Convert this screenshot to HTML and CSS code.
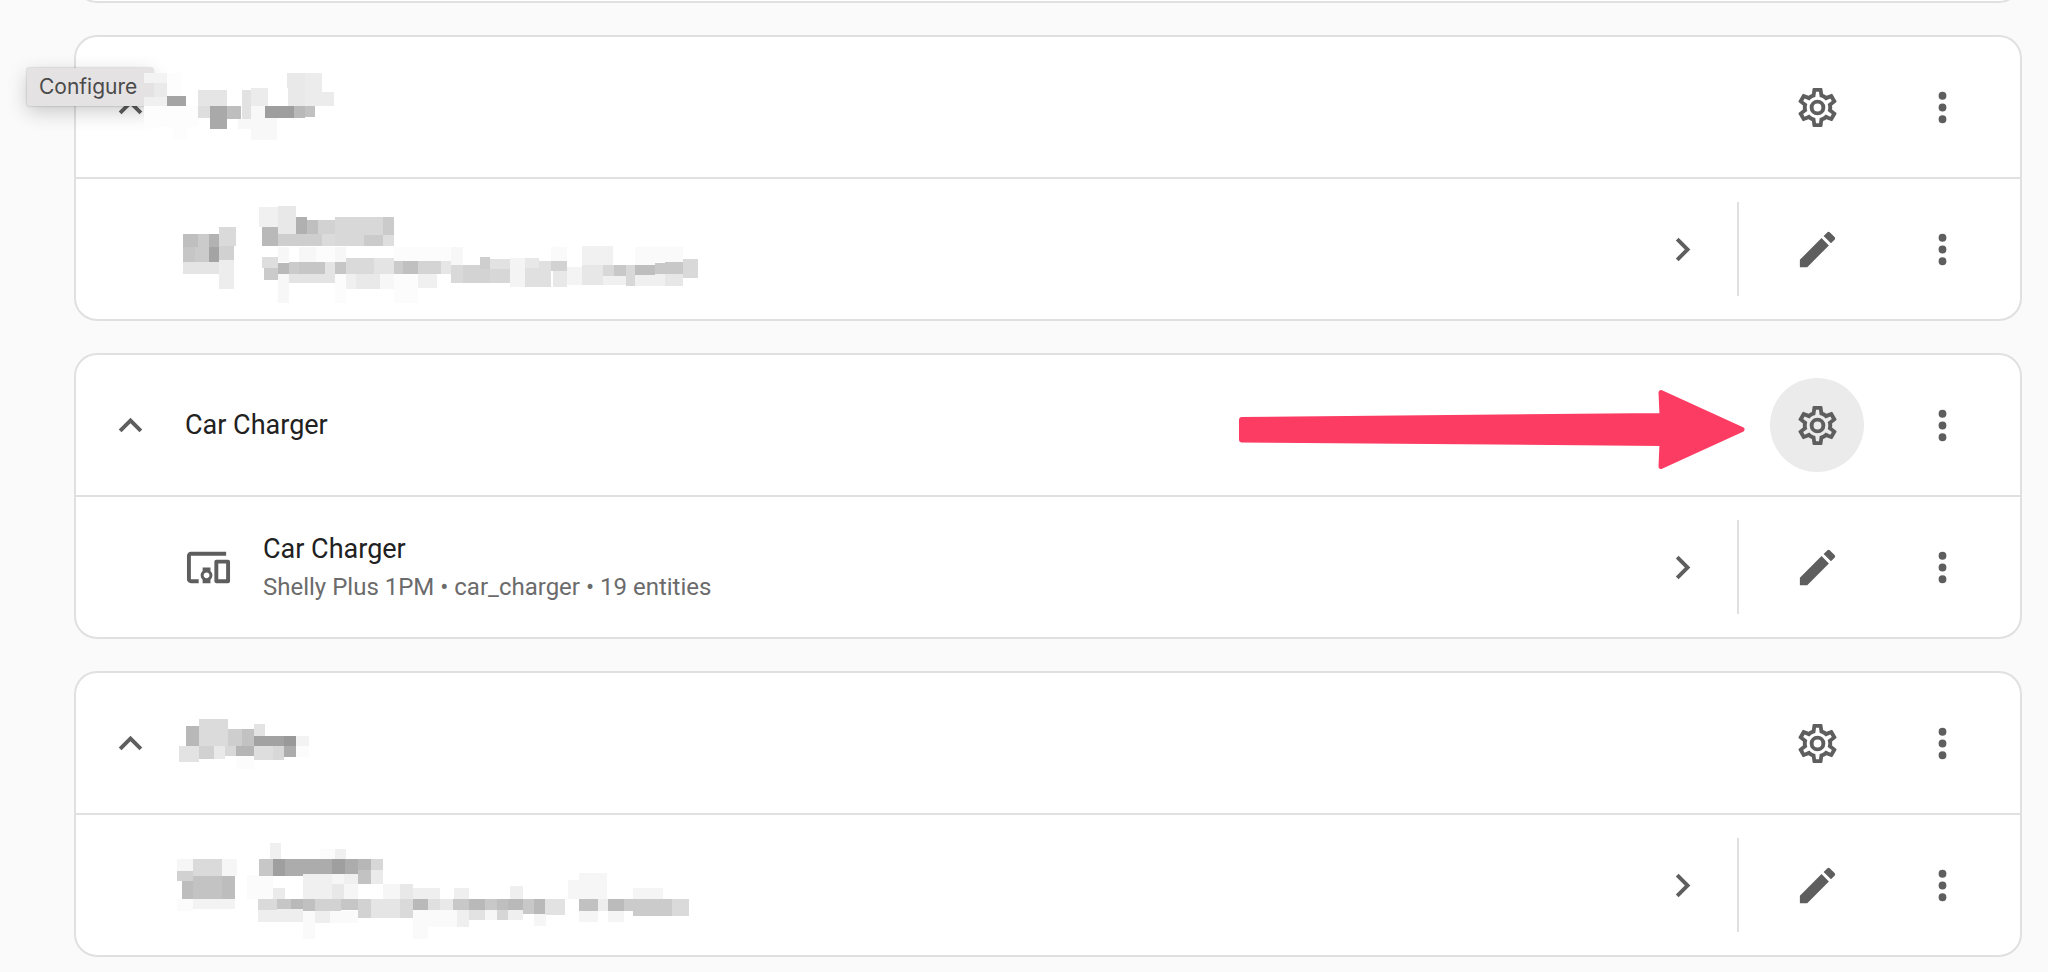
FILE: index.html
```html
<!DOCTYPE html>
<html lang="en">
<head>
  <meta charset="UTF-8" />
  <meta name="viewport" content="width=device-width, initial-scale=1" />
  <title>Devices</title>
  <link rel="stylesheet" href="styles.css">
</head>
<body>
  <svg class="sprite" aria-hidden="true">
    <symbol id="chevron-up" viewBox="0 0 24 24"><path d="M7.41,15.41L12,10.83L16.59,15.41L18,14L12,8L6,14L7.41,15.41Z"/></symbol>
    <symbol id="chevron-right" viewBox="0 0 24 24"><path d="M8.59,16.58L13.17,12L8.59,7.41L10,6L16,12L10,18L8.59,16.58Z"/></symbol>
    <symbol id="dots" viewBox="0 0 24 24"><path d="M12,16A2,2 0 0,1 14,18A2,2 0 0,1 12,20A2,2 0 0,1 10,18A2,2 0 0,1 12,16M12,10A2,2 0 0,1 14,12A2,2 0 0,1 12,14A2,2 0 0,1 10,12A2,2 0 0,1 12,10M12,4A2,2 0 0,1 14,6A2,2 0 0,1 12,8A2,2 0 0,1 10,6A2,2 0 0,1 12,4Z"/></symbol>
    <symbol id="pencil" viewBox="0 0 24 24"><path d="M20.71,7.04C21.1,6.65 21.1,6 20.71,5.63L18.37,3.29C18,2.9 17.35,2.9 16.96,3.29L15.12,5.12L18.87,8.87M3,17.25V21H6.75L17.81,9.93L14.06,6.18L3,17.25Z"/></symbol>
    <symbol id="devices" viewBox="0 0 24 24"><path d="M3 6H21V4H3C1.9 4 1 4.9 1 6V18C1 19.1 1.9 20 3 20H7V18H3V6M13 12H9V13.78C8.39 14.33 8 15.11 8 16C8 16.89 8.39 17.67 9 18.22V20H13V18.22C13.61 17.67 14 16.88 14 16S13.61 14.33 13 13.78V12M11 17.5C10.17 17.5 9.5 16.83 9.5 16S10.17 14.5 11 14.5 12.5 15.17 12.5 16 11.83 17.5 11 17.5M22 8H16C15.5 8 15 8.5 15 9V19C15 19.5 15.5 20 16 20H22C22.5 20 23 19.5 23 19V9C23 8.5 22.5 8 22 8M21 18H17V10H21V18Z"/></symbol>
    <symbol id="cog" viewBox="0 0 24 24"><path d="M12,8A4,4 0 0,1 16,12A4,4 0 0,1 12,16A4,4 0 0,1 8,12A4,4 0 0,1 12,8M12,10A2,2 0 0,0 10,12A2,2 0 0,0 12,14A2,2 0 0,0 14,12A2,2 0 0,0 12,10M10,22C9.75,22 9.54,21.82 9.5,21.58L9.13,18.93C8.5,18.68 7.96,18.34 7.44,17.94L4.95,18.95C4.73,19.03 4.46,18.95 4.34,18.73L2.34,15.27C2.21,15.05 2.27,14.78 2.46,14.63L4.57,12.97L4.5,12L4.57,11L2.46,9.37C2.27,9.22 2.21,8.95 2.34,8.73L4.34,5.27C4.46,5.05 4.73,4.96 4.95,5.05L7.44,6.05C7.96,5.66 8.5,5.32 9.13,5.07L9.5,2.42C9.54,2.18 9.75,2 10,2H14C14.25,2 14.46,2.18 14.5,2.42L14.87,5.07C15.5,5.32 16.04,5.66 16.56,6.05L19.05,5.05C19.27,4.96 19.54,5.05 19.66,5.27L21.66,8.73C21.79,8.95 21.73,9.22 21.54,9.37L19.43,11L19.5,12L19.43,13L21.54,14.63C21.73,14.78 21.79,15.05 21.66,15.27L19.66,18.73C19.54,18.95 19.27,19.04 19.05,18.95L16.56,17.95C16.04,18.34 15.5,18.68 14.87,18.93L14.5,21.58C14.46,21.82 14.25,22 14,22H10M11.25,4L10.88,6.61C9.68,6.86 8.62,7.5 7.85,8.39L5.44,7.35L4.69,8.65L6.8,10.2C6.4,11.37 6.4,12.64 6.8,13.8L4.68,15.36L5.43,16.66L7.86,15.62C8.63,16.5 9.68,17.14 10.87,17.38L11.24,20H12.76L13.13,17.39C14.32,17.14 15.37,16.5 16.14,15.62L18.57,16.66L19.32,15.36L17.2,13.81C17.6,12.64 17.6,11.37 17.2,10.2L19.31,8.65L18.56,7.35L16.15,8.39C15.38,7.5 14.32,6.86 13.12,6.62L12.75,4H11.25Z"/></symbol>
  </svg>

  <main class="entries">
    <section class="card card-above"></section>

    <section class="card">
      <div class="card-header">
        <button class="toggle" aria-label="Collapse"><svg class="icon"><use href="#chevron-up"/></svg></button>
        <div class="title">
          <svg class="mosaic" width="300" height="94" viewBox="555 177 900 282" aria-hidden="true">
            <path fill="#fdfdfd" d="M432 316h162v62H432zM520 378h42v38h-42zM502 216h40v70h-40z"/>
            <path fill="#f3f3f3" d="M432 216h70v30h-70z"/>
            <path fill="#e4e2e3" d="M432 246h31v41h-31z"/>
            <path fill="#eaeaea" d="M463 246h39v41h-39z"/>
            <path fill="#f0f0f0" d="M432 287h70v29h-70z"/>
            <path fill="#a4a4a4" d="M502 286h56v29h-56z"/>
            <path fill="#e5e5e5" d="M594 268h87v48h-87z"/>
            <path fill="#dedede" d="M594 316h37v35h-37z"/>
            <path fill="#a9a9a9" d="M631 316h50v67h-50z"/>
            <path fill="#bebebe" d="M681 316h42v37h-42z"/>
            <path fill="#e2e2e2" d="M725 268h29v85h-29z"/>
            <path fill="#ececec" d="M754 261h50v54h-50z"/>
            <path fill="#f8f8f8" d="M714 353h40v30h-40zM754 315h41v36h36v67h-77z"/>
            <path fill="#9e9e9e" d="M795 316h88v35h-88z"/>
            <path fill="#b9b9b9" d="M883 316h32v35h-32z"/>
            <path fill="#c1c1c1" d="M915 316h30v32h-30z"/>
            <path fill="#e9e9e9" d="M862 216h53v99h-50v-55h-3z"/>
            <path fill="#ececec" d="M915 216h50v58h38v41h-88z"/>
          </svg>
        </div>
        <button class="icon-button" aria-label="Configure"><svg class="icon"><use href="#cog"/></svg></button>
        <button class="icon-button" aria-label="Menu"><svg class="icon"><use href="#dots"/></svg></button>
      </div>
      <div class="tooltip" role="tooltip">Configure</div>
      <div class="device">
        <a class="device-link" href="#" aria-label="Open device">
          <svg class="mosaic" width="560" height="94" viewBox="75 36 1680 282" aria-hidden="true">
            <path fill="#bfbfbf" d="M69 131h45v39H69z"/>
            <path fill="#cbcbcb" d="M114 131h32v85h-41v-46h9z"/>
            <path fill="#b2b2b2" d="M146 131h31v39h-31z"/>
            <path fill="#c6c6c6" d="M69 170h36v46H69z"/>
            <path fill="#a4a4a4" d="M146 170h31v46h-31z"/>
            <path fill="#dadada" d="M177 111h51v57h-51z"/>
            <path fill="#d1d1d1" d="M177 168h45v42h-45z"/>
            <path fill="#ededed" d="M177 210h45v87h-45z"/>
            <path fill="#e5e5e5" d="M69 216h108v35H69z"/>
            <path fill="#f0f0f0" d="M297 52h56v59h-56z"/>
            <path fill="#e8e8e8" d="M353 48h55v83h-55z"/>
            <path fill="#b9b9b9" d="M306 111h47v57h-47z"/>
            <path fill="#b0b0b0" d="M408 81h33v51h-33z"/>
            <path fill="#bfbfbf" d="M441 90h32v42h-32z"/>
            <path fill="#d2d2d2" d="M473 90h52v42h-52z"/>
            <path fill="#cecece" d="M353 132h132v36H353z"/>
            <path fill="#dbdbdb" d="M485 132h40v36h-40z"/>
            <path fill="#d8d8d8" d="M525 81h144v87H525z"/>
            <path fill="#cbcbcb" d="M613 134h56v34h-56zM669 81h32v53h-32z"/>
            <path fill="#dedede" d="M669 134h32v34h-32z"/>
            <path fill="#f7f7f7" d="M353 170h35v46h-35zM417 170h50v46h-50zM353 251h35v87h-35zM525 170h33v46h-33z"/>
            <path fill="#fcfcfc" d="M467 170h58v46h-58zM525 251h33v87h-33zM701 170h172v43H701zM701 251h72v87h-72z"/>
            <path fill="#dedede" d="M306 201h47v33h-47z"/>
            <path fill="#cbcbcb" d="M312 234h41v35h-41zM388 216h29v35h-29zM701 213h29v38h-29z"/>
            <path fill="#b9b9b9" d="M353 219h35v32h-35z"/>
            <path fill="#c6c6c6" d="M417 216h79v35h-79zM525 216h33v35h-33z"/>
            <path fill="#e4e4e4" d="M388 251h137v28H388zM496 216h29v35h-29zM642 204h59v47h-59z"/>
            <path fill="#dadada" d="M558 204h84v47h-84z"/>
            <path fill="#f0f0f0" d="M558 251h29v46h-29zM773 251h57v43h-57z"/>
            <path fill="#e9e9e9" d="M587 251h73v46h-73z"/>
            <path fill="#f7f7f7" d="M660 251h41v46h-41zM873 170h36v55h-36z"/>
            <path fill="#c0c0c0" d="M730 213h44v38h-44z"/>
            <path fill="#d4d4d4" d="M774 213h70v38h-70z"/>
            <path fill="#e6e6e6" d="M844 213h29v38h-29z"/>
            <path fill="#d9d9d9" d="M873 225h35v54h-35z"/>
            <path fill="#d3d3d3" d="M908 225h82v54h-82z"/>
            <path fill="#cecece" d="M960 201h30v36h-30z"/>
            <path fill="#e2e2e2" d="M990 207h59v30h-59z"/>
            <path fill="#d7d7d7" d="M990 237h59v42h-59z"/>
            <path fill="#f4f4f4" d="M1049 204h46v87h-46zM1221 230h44v55h-44z"/>
            <path fill="#e8e8e8" d="M1095 204h41v30h-41zM1180 242h41v49h-41z"/>
            <path fill="#e0e0e0" d="M1095 234h41v-21h38v78h-79z"/>
            <path fill="#d2d2d2" d="M1174 213h47v29h-47z"/>
            <path fill="#fafafa" d="M1174 170h47v43h-47zM1425 170h60v55h-60zM1485 170h84v46h-84z"/>
            <path fill="#f1f1f1" d="M1265 168h94v57h-94z"/>
            <path fill="#e7e7e7" d="M1265 225h64v60h-64zM1516 251h53v37h-53z"/>
            <path fill="#d8d8d8" d="M1329 225h33v32h-33zM1398 225h27v64h-27z"/>
            <path fill="#c8c8c8" d="M1362 225h36v32h-36zM1485 219h31v-3h53v35h-84z"/>
            <path fill="#bebebe" d="M1425 225h60v31h-60z"/>
            <path fill="#f0f0f0" d="M1329 257h69v28h-69zM1425 256h60v-5h31v37h-91z"/>
            <path fill="#d9d9d9" d="M1569 207h44v56h-44z"/>
          </svg>
          <svg class="icon next"><use href="#chevron-right"/></svg>
        </a>
        <span class="separator"></span>
        <button class="icon-button" aria-label="Edit device"><svg class="icon"><use href="#pencil"/></svg></button>
        <button class="icon-button" aria-label="Menu"><svg class="icon"><use href="#dots"/></svg></button>
      </div>
    </section>

    <section class="card">
      <div class="card-header">
        <button class="toggle" aria-label="Collapse"><svg class="icon"><use href="#chevron-up"/></svg></button>
        <div class="title">Car Charger</div>
        <svg class="arrow" width="506" height="80" viewBox="0 0 506 80" aria-hidden="true">
          <path d="M2.5 29.5L423 25.5L422 2.5L503 39.5L422 76.5L423 53.5L2.5 50Z"/>
        </svg>
        <button class="icon-button active" aria-label="Configure"><svg class="icon"><use href="#cog"/></svg></button>
        <button class="icon-button" aria-label="Menu"><svg class="icon"><use href="#dots"/></svg></button>
      </div>
      <div class="device">
        <a class="device-link" href="#">
          <svg class="icon"><use href="#devices"/></svg>
          <div class="device-text">
            <div class="device-name">Car Charger</div>
            <div class="device-info">Shelly Plus 1PM • car_charger • 19 entities</div>
          </div>
          <svg class="icon next"><use href="#chevron-right"/></svg>
        </a>
        <span class="separator"></span>
        <button class="icon-button" aria-label="Edit device"><svg class="icon"><use href="#pencil"/></svg></button>
        <button class="icon-button" aria-label="Menu"><svg class="icon"><use href="#dots"/></svg></button>
      </div>
    </section>

    <section class="card">
      <div class="card-header">
        <button class="toggle" aria-label="Collapse"><svg class="icon"><use href="#chevron-up"/></svg></button>
        <div class="title">
          <svg class="mosaic" width="300" height="94" viewBox="75 18 900 282" aria-hidden="true">
            <path fill="#b8b8b8" d="M78 108h39v60H78z"/>
            <path fill="#dbdbdb" d="M117 88h87v80h-87z"/>
            <path fill="#cecece" d="M204 118h41v50h-41z"/>
            <path fill="#c2c2c2" d="M245 118h37v50h-37z"/>
            <path fill="#e3e3e3" d="M282 102h33v36h-33zM57 168h60v48H57z"/>
            <path fill="#d1d1d1" d="M117 168h45v39h-45z"/>
            <path fill="#e9e9e9" d="M162 168h33v39h-33z"/>
            <path fill="#d8d8d8" d="M195 168h33v30h-33zM338 168h34v41h-34z"/>
            <path fill="#b5b5b5" d="M228 168h54v30h-54z"/>
            <path fill="#dedede" d="M282 168h56v41h-56z"/>
            <path fill="#a2a2a2" d="M282 138h89v30h-89z"/>
            <path fill="#999" d="M371 138h37v30h-37z"/>
            <path fill="#acacac" d="M371 168h37v33h-37z"/>
            <path fill="#f3f3f3" d="M408 138h39v30h-39z"/>
            <path fill="#fcfcfc" d="M408 168h39v33h-39zM228 198h54v38h-54z"/>
          </svg>
        </div>
        <button class="icon-button" aria-label="Configure"><svg class="icon"><use href="#cog"/></svg></button>
        <button class="icon-button" aria-label="Menu"><svg class="icon"><use href="#dots"/></svg></button>
      </div>
      <div class="device">
        <a class="device-link" href="#" aria-label="Open device">
          <svg class="mosaic" width="560" height="94" viewBox="75 24 1680 282" aria-hidden="true">
            <path fill="#f6f6f6" d="M51 87h48v35H51zM186 87h45v52h-45z"/>
            <path fill="#dadada" d="M99 87h87v52H99z"/>
            <path fill="#d1d1d1" d="M51 122h48v32H51z"/>
            <path fill="#bdbdbd" d="M66 154h33v53H66zM186 139h39v68h-39z"/>
            <path fill="#c3c3c3" d="M99 139h87v68H99z"/>
            <path fill="#f3f3f3" d="M99 207h126v30H99z"/>
            <path fill="#fbfbfb" d="M51 207h48v35H51zM262 136h77v71h-77zM481 57h45v30h-45z"/>
            <path fill="#f0f0f0" d="M330 39h32v48h-32zM526 57h32v30h-32z"/>
            <path fill="#c7c7c7" d="M297 87h42v50h-42z"/>
            <path fill="#9f9f9f" d="M339 87h35v50h-35zM517 87h38v46h-38z"/>
            <path fill="#acacac" d="M374 87h143v46h-88v4h-55zM555 87h38v46h-38z"/>
            <path fill="#b7b7b7" d="M593 87h41v33h-41z"/>
            <path fill="#c2c2c2" d="M593 120h41v43h-41z"/>
            <path fill="#d7d7d7" d="M634 87h35v33h-35z"/>
            <path fill="#ebebeb" d="M634 120h35v43h-35zM339 174h35v33h-35z"/>
            <path fill="#f0f0f0" d="M429 133h88v74h-88zM552 133h41v30h-41z"/>
            <path fill="#e8e8e8" d="M517 163h35v44h-35zM719 162h40v45h-40z"/>
            <path fill="#f6f6f6" d="M517 133h35v30h-35zM552 163h41v44h-41zM669 162h50v45h-50z"/>
            <path fill="#dadada" d="M294 207h57v33h-57zM721 207h38v56h-38z"/>
            <path fill="#c6c6c6" d="M351 207h43v29h-43zM543 207h50v34h-50z"/>
            <path fill="#b9b9b9" d="M394 207h35v29h-35zM759 207h45v32h-45z"/>
            <path fill="#c0c0c0" d="M429 207h36v35h-36z"/>
            <path fill="#d2d2d2" d="M465 207h78v35h-78zM593 207h41v56h-41z"/>
            <path fill="#e5e5e5" d="M634 207h87v56h-87z"/>
            <path fill="#eee" d="M294 240h57v-4h78v41H294zM465 242h46v37h-46z"/>
            <path fill="#fafafa" d="M511 242h82v37h-82zM429 242h36v85h-36zM759 239h45v88h-45zM804 239h87v52h-87z"/>
            <path fill="#efefef" d="M759 174h82v33h-82zM882 174h45v33h-45z"/>
            <path fill="#dfdfdf" d="M804 207h37v32h-37z"/>
            <path fill="#e9e9e9" d="M841 207h38v32h-38z"/>
            <path fill="#c8c8c8" d="M879 207h48v32h-48z"/>
            <path fill="#efefef" d="M891 239h36v52h-36zM1044 239h45v31h-45zM1051 168h38v39h-38z"/>
            <path fill="#b9b9b9" d="M927 207h48v32h-48zM1044 207h45v32h-45zM1122 207h33v45h-33z"/>
            <path fill="#e2e2e2" d="M927 239h48v31h-48zM1155 207h60v47h-60z"/>
            <path fill="#c8c8c8" d="M975 207h36v32h-36zM1089 207h33v45h-33z"/>
            <path fill="#bfbfbf" d="M1011 207h33v32h-33z"/>
            <path fill="#f6f6f6" d="M975 239h36v31h-36zM1122 252h35v37h-35zM1224 151h33v56h-33zM1257 130h84v77h-84z"/>
            <path fill="#d6d6d6" d="M1011 239h33v32h-33z"/>
            <path fill="#c1c1c1" d="M1257 207h57v37h-57z"/>
            <path fill="#eee" d="M1314 207h30v37h-30z"/>
            <path fill="#bbb" d="M1344 207h48v37h-48z"/>
            <path fill="#cbcbcb" d="M1392 207h144v51h-117v-14h-27z"/>
            <path fill="#dadada" d="M1536 207h51v51h-51z"/>
            <path fill="#f5f5f5" d="M1419 174h89v33h-89zM1257 244h57v33h-57zM1344 244h48v33h-48z"/>
          </svg>
          <svg class="icon next"><use href="#chevron-right"/></svg>
        </a>
        <span class="separator"></span>
        <button class="icon-button" aria-label="Edit device"><svg class="icon"><use href="#pencil"/></svg></button>
        <button class="icon-button" aria-label="Menu"><svg class="icon"><use href="#dots"/></svg></button>
      </div>
    </section>
  </main>
</body>
</html>
```
FILE: styles.css
```css
* {
  box-sizing: border-box;
}

body {
  margin: 0;
  background-color: #fafafa;
  color: #212121;
  font-family: Roboto, sans-serif;
  font-size: 27px;
  overflow: hidden;
}

.sprite {
  display: none;
}

.entries {
  display: flex;
  flex-direction: column;
  gap: 32px;
  padding: 0 26px 0 74px;
}

.card {
  position: relative;
  background-color: #fff;
  border: 2px solid #e0e0e0;
  border-radius: 23px;
}

/* only the lower edge of this card is scrolled into view */
.card-above {
  height: 60px;
  margin-top: -57px;
}

.card-header,
.device {
  display: flex;
  align-items: center;
  gap: 31px;
  height: 140px;
  padding: 0 31px;
}

.card-header {
  position: relative;
}

.device {
  box-sizing: content-box;
  border-top: 2px solid #e0e0e0;
  padding-left: 109px;
}

button {
  border: none;
  padding: 0;
  background: none;
  color: #5e5e5e;
  cursor: pointer;
}

.icon {
  display: block;
  flex: none;
  width: 47px;
  height: 47px;
  fill: #5e5e5e;
}

.icon-button {
  display: flex;
  align-items: center;
  justify-content: center;
  flex: none;
  width: 94px;
  height: 94px;
  border-radius: 50%;
}

.icon-button.active,
.icon-button:hover {
  background-color: #ebebeb;
}

.title {
  flex: 1;
  line-height: 40px;
}

.device-link {
  display: flex;
  flex: 1;
  align-items: center;
  gap: 31px;
  color: inherit;
  text-decoration: none;
}

.device-name {
  line-height: 40px;
}

.device-info {
  color: #6b6b6b;
  font-size: 24px;
  line-height: 36px;
}

.next {
  margin-left: auto;
}

.separator {
  width: 2px;
  height: 94px;
  background-color: #e0e0e0;
}

.mosaic {
  position: relative;
  z-index: 2;
  display: block;
  overflow: visible;
  shape-rendering: crispEdges;
}

.arrow {
  position: absolute;
  top: 35px;
  right: 275px;
  fill: #fc3c62;
  stroke: #fc3c62;
  stroke-width: 5;
  stroke-linejoin: round;
}

.tooltip {
  position: absolute;
  z-index: 1;
  top: 31px;
  left: -49px;
  padding: 0 16px 0 12px;
  background-color: #e5e2e3;
  border-radius: 2px;
  box-shadow: 0 0 2px rgba(0,0,0,0.3), 0 6px 20px rgba(0,0,0,0.2);
  color: #4a4a4a;
  font-family: Inter, sans-serif;
  font-size: 21px;
  line-height: 38px;
}
```
